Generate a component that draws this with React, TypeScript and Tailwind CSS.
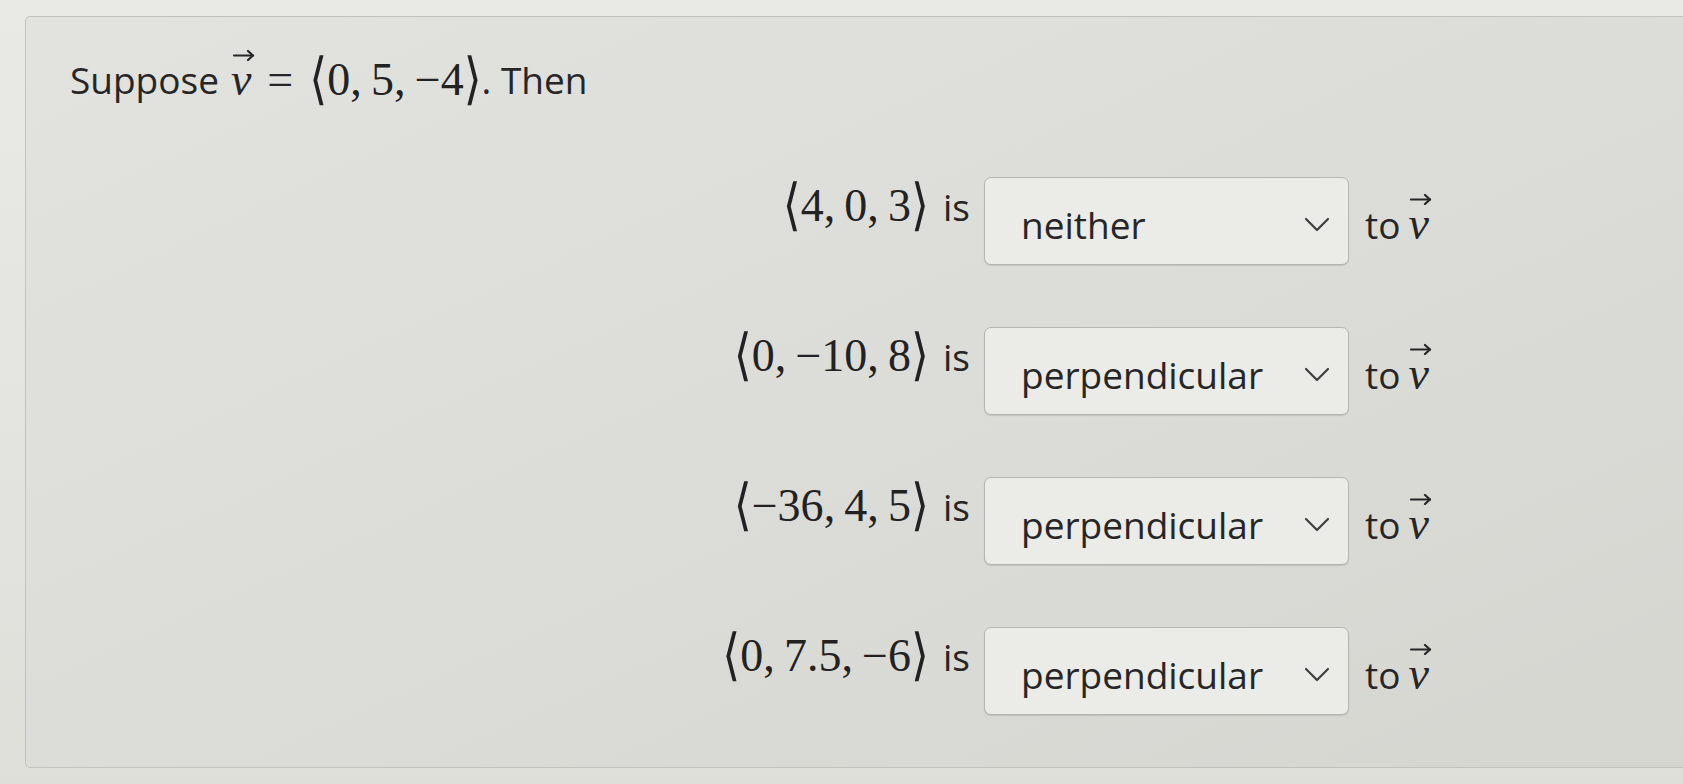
import React from "react";

const serif = "font-['Liberation_Serif','DejaVu_Serif',serif]";

function Vec() {
  return (
    <span className={`relative inline-block italic ${serif} text-[46px] leading-none`}>
      v
      <svg
        className="absolute left-[1px] top-[-9px] h-[13px] w-[23px]"
        viewBox="0 0 23 13"
        fill="none"
        stroke="#262626"
        strokeWidth="2.2"
        strokeLinecap="round"
        strokeLinejoin="round"
      >
        <path d="M2 7.5 H21" />
        <path d="M16 3 L21 7.5 L16 12" />
      </svg>
    </span>
  );
}

function Chevron() {
  return (
    <svg className="h-[15px] w-[26px]" viewBox="0 0 26 15" fill="none" stroke="#3f3f3f" strokeWidth="2.2" strokeLinecap="round" strokeLinejoin="round">
      <path d="M2 2 L13 13 L24 2" />
    </svg>
  );
}

function B({ c }: { c: string }) {
  return <span className="inline-block scale-y-[1.22] font-light">{c}</span>;
}

function Tuple({ items }: { items: string[] }) {
  return (
    <span className={`${serif} text-[46px] leading-none text-[#222]`}>
      <B c="⟨" />
      {items.map((it, i) => (
        <React.Fragment key={i}>
          {it}
          {i < items.length - 1 ? ",\u2009" : ""}
        </React.Fragment>
      ))}
      <B c="⟩" />
    </span>
  );
}

const rows = [
  { items: ["4", "0", "3"], value: "neither" },
  { items: ["0", "−10", "8"], value: "perpendicular" },
  { items: ["−36", "4", "5"], value: "perpendicular" },
  { items: ["0", "7.5", "−6"], value: "perpendicular" },
];

export default function App() {
  return (
    <div className="h-[784px] w-[1683px] overflow-hidden bg-gradient-to-b from-[#e9e9e6] to-[#dfdfda] pl-[25px] pt-[16px] font-['Open_Sans',sans-serif] text-[#262626]">
      <div className="h-[752px] rounded-l-[5px] border border-r-0 border-[#c2c2bd] bg-gradient-to-br from-[#e2e2df] via-[#dcdcd8] to-[#d6d6d1] pl-[44px] pt-[38px]">
        <div className="flex h-[50px] items-center text-[37px]">
          <span>Suppose</span>
          <span className="ml-[12px] flex items-center gap-[16px]">
            <Vec />
            <span className={`${serif} text-[46px] leading-none`}>=</span>
            <Tuple items={["0", "5", "−4"]} />
          </span>
          <span>. Then</span>
        </div>

        <div className="ml-[620px] mt-[72px] flex flex-col gap-[62px]">
          {rows.map((r, i) => (
            <div key={i} className="flex items-center">
              <div className="flex w-[280px] items-center justify-end gap-[14px] pb-[30px]">
                <Tuple items={r.items} />
                <span className="text-[37px] leading-none">is</span>
              </div>
              <div className="ml-[14px] flex h-[88px] w-[365px] items-center justify-between rounded-[7px] border border-[#b6b6b1] bg-[#ebebe8] pl-[36px] pr-[18px] pt-[6px] shadow-[0_1px_1px_rgba(0,0,0,0.12)]">
                <span className="text-[37px] leading-none">{r.value}</span>
                <Chevron />
              </div>
              <div className="ml-[16px] flex items-center gap-[8px] pt-[6px]">
                <span className="text-[37px] leading-none">to</span>
                <Vec />
              </div>
            </div>
          ))}
        </div>
      </div>
    </div>
  );
}
